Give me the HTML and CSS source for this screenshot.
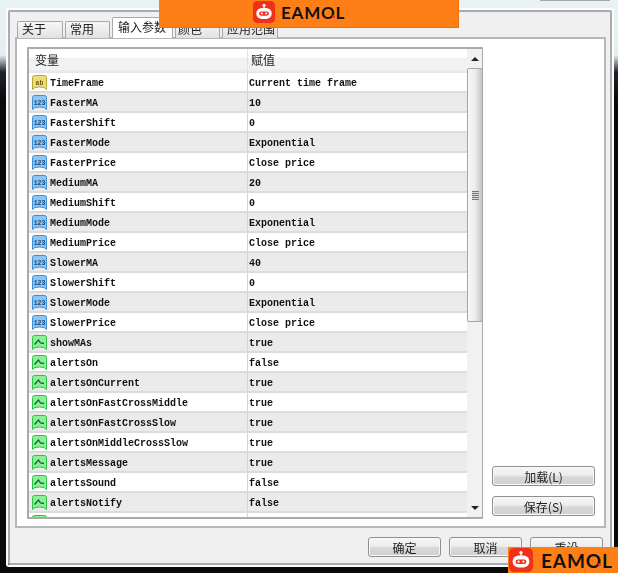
FILE: index.html
```html
<!DOCTYPE html>
<html lang="zh">
<head>
<meta charset="utf-8">
<title>输入参数</title>
<link rel="stylesheet" href="styles.css">
</head>
<body>
<svg class="defs" width="0" height="0" aria-hidden="true">
  <symbol id="ic-ab" viewBox="0 0 17 17">
    <path d="M1.5 3.5Q1.5 1.5 3.5 1.5H13.5Q15.5 1.5 15.5 3.5V15.5L13 13.5Q8.5 12.5 4 13.5L1.5 15.5Z" fill="#ecdc7c" stroke="#b9a93c"/>
    <text x="8.5" y="10.5" class="ic-text" fill="#6b5a10">ab</text>
  </symbol>
  <symbol id="ic-num" viewBox="0 0 17 17">
    <path d="M1.5 3.5Q1.5 1.5 3.5 1.5H13.5Q15.5 1.5 15.5 3.5V15.5L13 13.5Q8.5 12.5 4 13.5L1.5 15.5Z" fill="#8cc4f2" stroke="#3f8fd6"/>
    <text x="8.5" y="10.5" class="ic-text" fill="#17457e">123</text>
  </symbol>
  <symbol id="ic-bool" viewBox="0 0 17 17">
    <path d="M1.5 3.5Q1.5 1.5 3.5 1.5H13.5Q15.5 1.5 15.5 3.5V15.5L13 13.5Q8.5 12.5 4 13.5L1.5 15.5Z" fill="#8aef96" stroke="#2ec44a"/>
    <path d="M3.5 10.5L7.5 6L9.5 9L13 9.5" fill="none" stroke="#14662a" stroke-width="1.3"/>
  </symbol>
  <symbol id="ic-logo" viewBox="0 0 24 24">
    <rect width="24" height="24" rx="5" fill="#f0301a"/>
    <circle cx="12" cy="4.6" r="1.7" fill="#fff"/>
    <rect x="11.3" y="5" width="1.4" height="3" fill="#fff"/>
    <rect x="3.6" y="7.6" width="16.8" height="12" rx="6" fill="#fff"/>
    <rect x="6.6" y="11.4" width="10.8" height="4.6" rx="2.3" fill="#f0301a"/>
    <circle cx="9.6" cy="13.7" r="1.1" fill="#fff"/>
    <circle cx="14.4" cy="13.7" r="1.1" fill="#fff"/>
  </symbol>
</svg>

<div class="desktop">
  <div class="title-btn"></div>
  <div class="window">
    <div class="frame">
      <div class="tabs">
        <span class="tab tab-about">关于</span>
        <span class="tab tab-common">常用</span>
        <span class="tab tab-active">输入参数</span>
        <span class="tab tab-color">颜色</span>
        <span class="tab tab-range">应用范围</span>
      </div>
      <div class="panel">
        <div class="list">
          <div class="table">
            <div class="head"><span class="cell-name">变量</span><span class="cell-value">赋值</span></div>
            <div class="rows">
              <div class="row"><span class="cell-name"><svg class="ic"><use href="#ic-ab"/></svg>TimeFrame</span><span class="cell-value">Current time frame</span></div>
              <div class="row"><span class="cell-name"><svg class="ic"><use href="#ic-num"/></svg>FasterMA</span><span class="cell-value">10</span></div>
              <div class="row"><span class="cell-name"><svg class="ic"><use href="#ic-num"/></svg>FasterShift</span><span class="cell-value">0</span></div>
              <div class="row"><span class="cell-name"><svg class="ic"><use href="#ic-num"/></svg>FasterMode</span><span class="cell-value">Exponential</span></div>
              <div class="row"><span class="cell-name"><svg class="ic"><use href="#ic-num"/></svg>FasterPrice</span><span class="cell-value">Close price</span></div>
              <div class="row"><span class="cell-name"><svg class="ic"><use href="#ic-num"/></svg>MediumMA</span><span class="cell-value">20</span></div>
              <div class="row"><span class="cell-name"><svg class="ic"><use href="#ic-num"/></svg>MediumShift</span><span class="cell-value">0</span></div>
              <div class="row"><span class="cell-name"><svg class="ic"><use href="#ic-num"/></svg>MediumMode</span><span class="cell-value">Exponential</span></div>
              <div class="row"><span class="cell-name"><svg class="ic"><use href="#ic-num"/></svg>MediumPrice</span><span class="cell-value">Close price</span></div>
              <div class="row"><span class="cell-name"><svg class="ic"><use href="#ic-num"/></svg>SlowerMA</span><span class="cell-value">40</span></div>
              <div class="row"><span class="cell-name"><svg class="ic"><use href="#ic-num"/></svg>SlowerShift</span><span class="cell-value">0</span></div>
              <div class="row"><span class="cell-name"><svg class="ic"><use href="#ic-num"/></svg>SlowerMode</span><span class="cell-value">Exponential</span></div>
              <div class="row"><span class="cell-name"><svg class="ic"><use href="#ic-num"/></svg>SlowerPrice</span><span class="cell-value">Close price</span></div>
              <div class="row"><span class="cell-name"><svg class="ic"><use href="#ic-bool"/></svg>showMAs</span><span class="cell-value">true</span></div>
              <div class="row"><span class="cell-name"><svg class="ic"><use href="#ic-bool"/></svg>alertsOn</span><span class="cell-value">false</span></div>
              <div class="row"><span class="cell-name"><svg class="ic"><use href="#ic-bool"/></svg>alertsOnCurrent</span><span class="cell-value">true</span></div>
              <div class="row"><span class="cell-name"><svg class="ic"><use href="#ic-bool"/></svg>alertsOnFastCrossMiddle</span><span class="cell-value">true</span></div>
              <div class="row"><span class="cell-name"><svg class="ic"><use href="#ic-bool"/></svg>alertsOnFastCrossSlow</span><span class="cell-value">true</span></div>
              <div class="row"><span class="cell-name"><svg class="ic"><use href="#ic-bool"/></svg>alertsOnMiddleCrossSlow</span><span class="cell-value">true</span></div>
              <div class="row"><span class="cell-name"><svg class="ic"><use href="#ic-bool"/></svg>alertsMessage</span><span class="cell-value">true</span></div>
              <div class="row"><span class="cell-name"><svg class="ic"><use href="#ic-bool"/></svg>alertsSound</span><span class="cell-value">false</span></div>
              <div class="row"><span class="cell-name"><svg class="ic"><use href="#ic-bool"/></svg>alertsNotify</span><span class="cell-value">false</span></div>
              <div class="row"><span class="cell-name"><svg class="ic"><use href="#ic-bool"/></svg></span><span class="cell-value"></span></div>
            </div>
          </div>
          <div class="scrollbar">
            <div class="sb-btn"><span class="arrow-up"></span></div>
            <div class="thumb"><span class="grip"></span></div>
            <div class="sb-track"></div>
            <div class="sb-btn"><span class="arrow-down"></span></div>
          </div>
        </div>
        <div class="side">
          <button class="btn btn-wide">加载(L)</button>
          <button class="btn btn-wide">保存(S)</button>
        </div>
      </div>
      <div class="footer">
        <button class="btn btn-foot">确定</button>
        <button class="btn btn-foot">取消</button>
        <button class="btn btn-foot">重设</button>
      </div>
    </div>
  </div>
  <div class="mark mark-top"><svg class="mark-ic"><use href="#ic-logo"/></svg><span class="mark-text">EAM<span class="mark-o">O</span>L</span></div>
  <div class="mark mark-bottom"><svg class="mark-ic"><use href="#ic-logo"/></svg><span class="mark-text">EAM<span class="mark-o">O</span>L</span></div>
</div>
</body>
</html>
```

FILE: styles.css
```css
* { box-sizing: border-box; }
html, body { margin: 0; padding: 0; }
.defs { position: absolute; }
.ic-text { font: bold 6.5px "Liberation Mono", monospace; text-anchor: middle; }

.desktop {
  position: relative;
  width: 618px;
  height: 573px;
  overflow: hidden;
  background: linear-gradient(#e9f3f4 0, #e6eef0 55px, #20242a 72px, #0a0a0c 100px);
  font-family: "Noto Sans CJK SC", "Liberation Sans", sans-serif;
}

.title-btn {
  position: absolute;
  left: 540px;
  top: -2px;
  width: 70px;
  height: 3px;
  background: #a9a9a9;
}

.window {
  position: absolute;
  left: 6px;
  top: 8px;
  width: 608px;
  height: 559px;
  border: 2px solid #fdfdfd;
  border-radius: 3px;
  filter: blur(0.75px);
}

.frame {
  height: 100%;
  border: 2px solid #a9abae;
  border-radius: 2px;
  background: #f0f0f0;
  padding: 5px 5px 0;
  display: flex;
  flex-direction: column;
}

.tabs {
  display: flex;
  align-items: flex-end;
  height: 21px;
  margin-bottom: -1px;
  padding-left: 2px;
  position: relative;
  z-index: 1;
  gap: 2px;
}
.tab {
  height: 17px;
  border: 1px solid #a6a8ac;
  border-bottom: 0;
  background: linear-gradient(#f6f6f6, #e2e2e2);
  font-size: 12px;
  line-height: 14px;
  color: #222;
  border-radius: 2px 2px 0 0;
  white-space: nowrap;
  overflow: hidden;
}
.tab-about { width: 46px; padding-left: 4px; }
.tab-common { width: 45px; padding-left: 4px; }
.tab-active { width: 61px; height: 21px; background: #fff; line-height: 18px; padding-left: 5px; }
.tab-color { width: 45px; padding-left: 2px; }
.tab-range { width: 56px; padding-left: 4px; }

.panel {
  width: 591px;
  height: 491px;
  border: 2px solid #b6b7bb;
  background: #fff;
  padding: 8px 0 0 10px;
  display: flex;
  flex: none;
}

.list {
  width: 456px;
  height: 472px;
  border: 2px solid #a8aaae;
  border-right-width: 1px;
  border-radius: 1px;
  display: flex;
  overflow: hidden;
  flex: none;
}

.table { width: 438px; flex: none; }

.head, .row {
  display: grid;
  grid-template-columns: 218px 1fr;
}
.head {
  height: 24px;
  background: linear-gradient(#fff 0, #fff 8px, #f2f2f2 9px, #f2f2f2 20px, #e4e4e4 24px);
  font-size: 12px;
  line-height: 22px;
  color: #222;
}
.head .cell-name { padding-left: 6px; }
.head .cell-value { padding-left: 3px; border-left: 1px solid #e2e2e2; }

.row {
  height: 20px;
  grid-template-rows: 18px;
  border-bottom: 2px solid #dcdcdc;
  background: #fff;
  font: bold 10px/15px "Liberation Mono", monospace;
  color: #111;
}
.row:nth-child(even) { background: #ebebeb; }
.row .cell-name {
  display: flex;
  align-items: center;
  gap: 2px;
  padding: 3px 0 0 2px;
}
.row .cell-value { padding: 3px 0 0 1px; border-left: 1px solid #d4d4d4; }
.ic { width: 17px; height: 17px; flex: none; margin-top: -2px; }

.scrollbar {
  width: 16px;
  flex: none;
  background: #f1f1f1;
  display: flex;
  flex-direction: column;
}
.sb-btn {
  height: 19px;
  flex: none;
  display: flex;
  align-items: center;
  justify-content: center;
}
.arrow-up, .arrow-down {
  width: 0;
  height: 0;
  border-left: 4px solid transparent;
  border-right: 4px solid transparent;
}
.arrow-up { border-bottom: 4px solid #222; }
.arrow-down { border-top: 4px solid #222; }
.thumb {
  height: 254px;
  flex: none;
  border: 1px solid #a4a6a8;
  border-radius: 2px;
  background: linear-gradient(90deg, #f8f8f8 0, #ececec 50%, #c4c4c4 100%);
  display: flex;
  align-items: center;
  justify-content: center;
}
.grip {
  width: 7px;
  height: 9px;
  background: repeating-linear-gradient(#777 0, #777 1px, #d8d8d8 1px, #d8d8d8 2px);
}
.sb-track { flex: 1; }

.side {
  width: 103px;
  margin-left: 9px;
  align-self: flex-end;
  margin-bottom: 10px;
  display: flex;
  flex-direction: column;
  gap: 10px;
  flex: none;
}

.btn {
  height: 20px;
  padding: 0;
  border: 1px solid #8e9092;
  border-radius: 3px;
  background: linear-gradient(#f6f6f6 0, #ededed 45%, #d8d8d8 55%, #d0d0d0 100%);
  box-shadow: inset 0 0 0 1px #f8f8f8;
  font: 12px/17px "Noto Sans CJK SC", "Liberation Sans", sans-serif;
  color: #222;
}
.btn-wide { width: 103px; }
.btn-foot { width: 73px; }

.footer {
  display: flex;
  justify-content: flex-end;
  gap: 8px;
  padding: 9px 2px 0 0;
}

.mark {
  position: absolute;
  display: flex;
  align-items: center;
  background: #ff7f17;
  color: #111;
  font-family: "Lato", "Liberation Sans", sans-serif;
}
.mark-top {
  left: 159px;
  top: 0;
  width: 300px;
  height: 28px;
  padding: 0 0 3px 94px;
  gap: 6px;
  border-bottom: 1px solid #f07010;
  border-right: 1px solid #f07010;
}
.mark-top .mark-ic { width: 22px; height: 22px; }
.mark-top .mark-text { font-size: 17px; letter-spacing: 0.8px; }
.mark-bottom {
  left: 508px;
  top: 547px;
  width: 110px;
  height: 26px;
  padding-left: 1px;
  gap: 8px;
}
.mark-bottom .mark-ic { width: 24px; height: 24px; }
.mark-bottom .mark-text { font-size: 19px; letter-spacing: 0.9px; }
.mark-ic { flex: none; }
.mark-text { font-weight: 700; white-space: nowrap; }
.mark-o { position: relative; }
.mark-o::after {
  content: "";
  position: absolute;
  right: 1px;
  bottom: 22%;
  width: 3px;
  height: 3px;
  border-radius: 50%;
  background: #f0301a;
}
```
